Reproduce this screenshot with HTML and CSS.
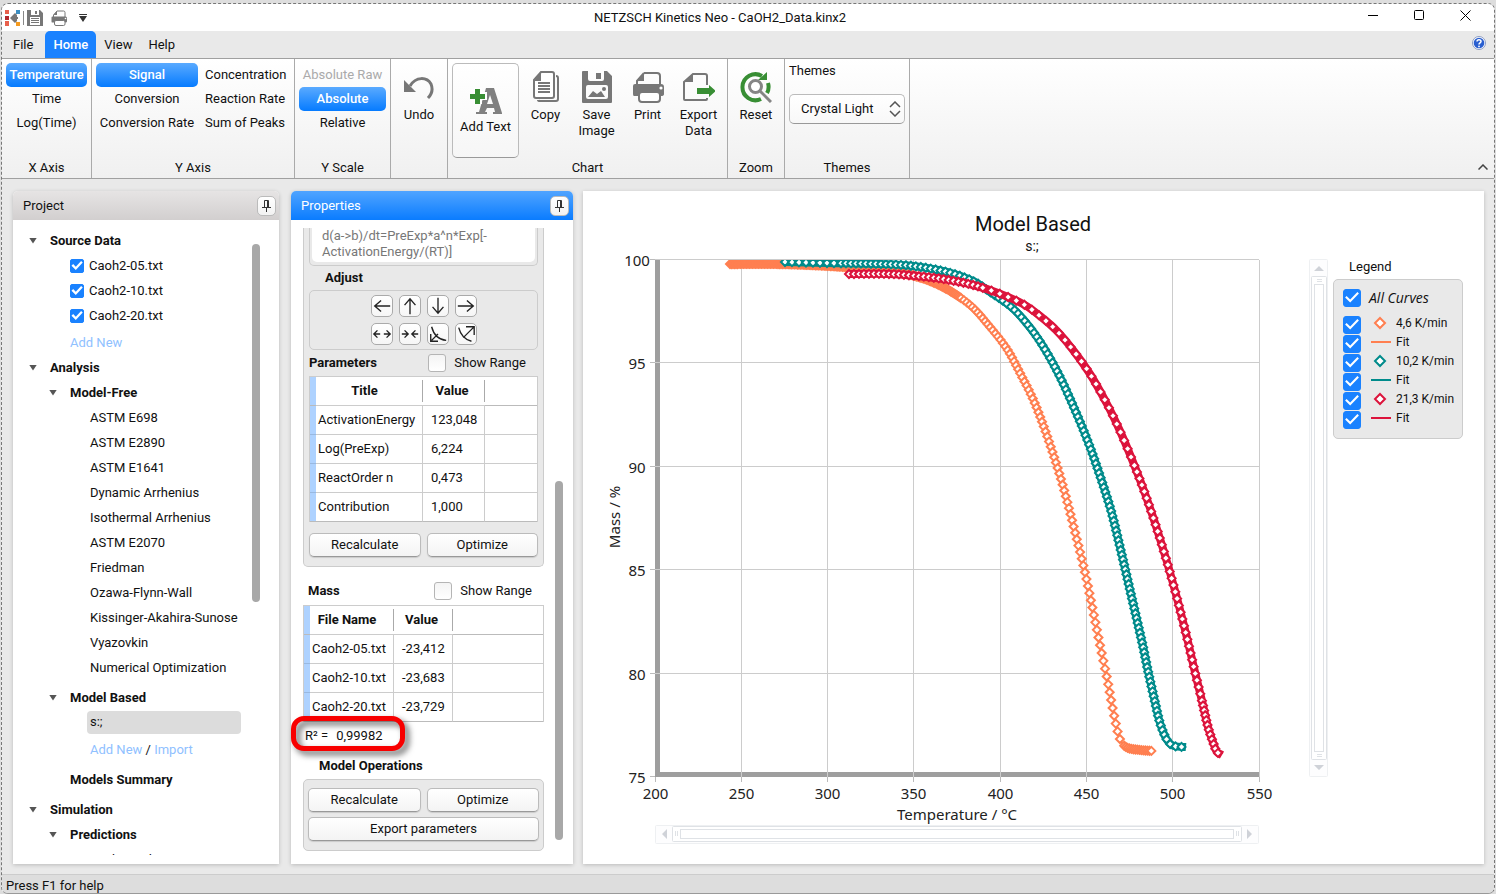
FILE: index.html
```html
<!DOCTYPE html>
<html lang="en">
<head>
<meta charset="utf-8">
<title>NETZSCH Kinetics Neo - CaOH2_Data.kinx2</title>
<link rel="stylesheet" href="styles.css">
</head>
<body>
<div class="window">
  <header class="titlebar">
    <div class="quick">
      <svg class="logo" width="16" height="16" viewBox="0 0 16 16" aria-hidden="true">
        <path fill="#e8604c" d="M0 0h4v4H0zM0 11h4v5H0z"/><path fill="#b3282d" d="M0 6h4v4H0z"/>
        <path fill="#3b8ec2" d="M11 0h4v4h-4z"/><path fill="#f59b20" d="M11 12h4v4h-4z"/>
        <path fill="#777" d="M5 8l5-5 2 2v2h1v2h-1v2l-2 2z"/>
      </svg>
      <span class="quick-sep"></span>
      <button class="icon-btn" aria-label="Save">
        <svg width="16" height="16" viewBox="0 0 16 16"><path fill="#777" fill-rule="evenodd" d="M0 0h13l3 3v13H0zM4 0v5h8V0zM3 7v8h10V7z"/><path fill="#777" d="M8 1h2v3H8zM4 8h8v1H4zM4 10h8v1H4zM4 12h8v1H4z"/></svg>
      </button>
      <button class="icon-btn" aria-label="Print">
        <svg width="16" height="16" viewBox="0 0 32 32"><use href="#printer"/></svg>
      </button>
      <button class="icon-btn" aria-label="Customize toolbar">
        <svg width="8" height="8" viewBox="0 0 8 8"><path fill="#333" d="M0 0h8v1H0zM0 2h8L4 8z"/></svg>
      </button>
    </div>
    <h1 class="window-title">NETZSCH Kinetics Neo - CaOH2_Data.kinx2</h1>
    <div class="window-controls">
      <button aria-label="Minimize"><svg width="11" height="11" viewBox="0 0 11 11"><path d="M0 5.5h10" stroke="#000"/></svg></button>
      <button aria-label="Maximize"><svg width="11" height="11" viewBox="0 0 11 11"><rect x=".5" y=".5" width="9" height="9" rx="1" fill="none" stroke="#000"/></svg></button>
      <button aria-label="Close"><svg width="11" height="11" viewBox="0 0 11 11"><path d="M.5 .5l10 10m0-10l-10 10" stroke="#000"/></svg></button>
    </div>
  </header>

  <nav class="menubar">
    <button class="menu first">File</button>
    <button class="menu active">Home</button>
    <button class="menu">View</button>
    <button class="menu">Help</button>
    <button class="help" aria-label="About"><svg width="14" height="14" viewBox="0 0 14 14"><circle cx="7" cy="7" r="6.5" fill="#fff" stroke="#8a9bc4"/><circle cx="7" cy="7" r="5.3" fill="#2a5fd0"/><path d="M5 5.6C5 3.2 9 3.2 9 5.4 9 6.8 7 6.8 7 8.4" fill="none" stroke="#fff" stroke-width="1.5"/><circle cx="7" cy="10.4" r=".9" fill="#fff"/></svg></button>
  </nav>

  <div class="ribbon">
    <section class="group x-axis">
      <div class="group-body stack">
        <button class="opt on">Temperature</button><button class="opt">Time</button><button class="opt">Log(Time)</button>
      </div>
      <h2>X Axis</h2>
    </section>
    <section class="group y-axis">
      <div class="group-body pair">
        <div class="stack"><button class="opt on">Signal</button><button class="opt">Conversion</button><button class="opt">Conversion Rate</button></div>
        <div class="stack left"><button class="opt">Concentration</button><button class="opt">Reaction Rate</button><button class="opt">Sum of Peaks</button></div>
      </div>
      <h2>Y Axis</h2>
    </section>
    <section class="group y-scale">
      <div class="group-body stack">
        <button class="opt" disabled>Absolute Raw</button><button class="opt on">Absolute</button><button class="opt">Relative</button>
      </div>
      <h2>Y Scale</h2>
    </section>
    <section class="group narrow">
      <div class="group-body">
        <button class="tool"><svg width="32" height="32" viewBox="0 0 32 32"><path fill="none" stroke="#777" stroke-width="3" d="M7 15C13 5 24 6 28 13C30 18 29 23 25 27"/><path fill="#777" d="M1 9v12h12l-4-4z"/></svg><span>Undo</span></button>
      </div>
      <h2></h2>
    </section>
    <section class="group chart-group">
      <div class="group-body tools">
        <button class="tool framed"><svg width="32" height="32" viewBox="0 0 32 32"><path fill="#808080" fill-rule="evenodd" d="M16 5h8l8 25v1h-9v-2h2l-1-4h-7l-2 4h2v2H6v-2h3zM20 12l-3 9h6z"/><path fill="#fff" d="M4 5h8v4h5v8h-5v4H4z"/><path fill="#388e34" d="M5 6h5v5h5v5h-5v5H5v-5H0v-5h5z"/></svg><span>Add Text</span></button>
        <button class="tool"><svg width="32" height="32" viewBox="0 0 32 32"><path fill="#fff" stroke="#777" stroke-width="2" d="M11 1h11q2 0 2 2v22q0 2-2 2H6q-2 0-2-2V9z"/><path fill="#777" d="M11 1v9H4z"/><path fill="none" stroke="#777" stroke-width="2" d="M26 5q2 0 2 2v21q0 2-2 2H10q-2 0-2-1M8 12h12M8 15h12M8 18h12M8 21h12"/></svg><span>Copy</span></button>
        <button class="tool"><svg width="32" height="32" viewBox="0 0 32 32"><path fill="#777" fill-rule="evenodd" d="M1 1q0-1 1-1h24l5 5v26q0 1-1 1H2q-1 0-1-1zM7 0v8q0 2 2 2h12q2 0 2-2V0zM7 14q-2 0-2 2v10q0 2 2 2h18q2 0 2-2V16q0-2-2-2z"/><path fill="#777" d="M15 2h5v6h-5zM7 26l5-6 4 3 4-3 4 6z"/><circle cx="23" cy="18" r="2" fill="#777"/></svg><span>Save Image</span></button>
        <button class="tool"><svg width="32" height="32" viewBox="0 0 32 32"><g id="printer" fill="none"><path stroke="#777" stroke-width="2" d="M12 2h13q3 0 3 3v10M5 15v-5l7-8"/><path fill="#777" d="M12 2v8H5zM1 15q0-2 2-2h26q3 0 3 3v7q0 2-3 2H2q-1 0-1-2z"/><circle cx="29" cy="17" r="1.6" fill="#fff"/><rect x="7" y="21" width="21" height="10" rx="3" fill="#fff" stroke="#777" stroke-width="2"/></g></svg><span>Print</span></button>
        <button class="tool"><svg width="32" height="32" viewBox="0 0 32 32"><path fill="none" stroke="#777" stroke-width="2" d="M24 14V5q0-2-2-2H10L1 11v17q0 1 1 1h21q1 0 1-1v-1"/><path fill="#777" d="M10 3v8H1z"/><path fill="#388e34" d="M14 17h12v-3l7 6-7 6v-3H14z"/></svg><span>Export Data</span></button>
      </div>
      <h2>Chart</h2>
    </section>
    <section class="group narrow">
      <div class="group-body">
        <button class="tool"><svg width="32" height="32" viewBox="0 0 32 32"><path fill="none" stroke="#388e34" stroke-width="4" d="M22 5A13 13 0 1 0 21 28M28 12A13 13 0 0 1 27 22"/><path fill="#388e34" d="M18 9h9V1z"/><circle cx="15.500" cy="15.500" r="6" fill="#fff" stroke="#858585" stroke-width="3"/><path stroke="#858585" stroke-width="3" d="M20 20l11 11"/></svg><span>Reset</span></button>
      </div>
      <h2>Zoom</h2>
    </section>
    <section class="group themes">
      <div class="group-body">
        <label for="theme">Themes</label>
        <div class="select-wrap">
          <select id="theme"><option>Crystal Light</option></select>
          <svg width="12" height="16" viewBox="0 0 12 16" aria-hidden="true"><path fill="none" stroke="#555" stroke-width="1.500" d="M1 6l5-5 5 5M1 10l5 5 5-5"/></svg>
        </div>
      </div>
      <h2>Themes</h2>
    </section>
    <button class="collapse" aria-label="Collapse ribbon"><svg width="10" height="6" viewBox="0 0 10 6"><path fill="none" stroke="#444" stroke-width="1.500" d="M.5 5.500L5 1l4.500 4.500"/></svg></button>
  </div>

  <main class="workspace">
    <aside class="panel project">
      <header class="panel-head"><h2>Project</h2><button class="pin" aria-label="Pin"><svg width="9" height="12" viewBox="0 0 9 12"><path fill="none" stroke="#333" d="M2.500 7V.500h4V7M5.500 1v6M0 7.500h9M4.500 7v5"/></svg></button></header>
      <div class="panel-body">
        <ul class="tree">
          <li class="l1"><i class="tri"></i><b>Source Data</b></li>
          <li class="l2"><label><input type="checkbox" checked>Caoh2-05.txt</label></li>
          <li class="l2"><label><input type="checkbox" checked>Caoh2-10.txt</label></li>
          <li class="l2"><label><input type="checkbox" checked>Caoh2-20.txt</label></li>
          <li class="l2 link-row"><a href="#">Add New</a></li>
          <li class="l1"><i class="tri"></i><b>Analysis</b></li>
          <li class="l2"><i class="tri"></i><b>Model-Free</b></li>
          <li class="l3">ASTM E698</li>
          <li class="l3">ASTM E2890</li>
          <li class="l3">ASTM E1641</li>
          <li class="l3">Dynamic Arrhenius</li>
          <li class="l3">Isothermal Arrhenius</li>
          <li class="l3">ASTM E2070</li>
          <li class="l3">Friedman</li>
          <li class="l3">Ozawa-Flynn-Wall</li>
          <li class="l3">Kissinger-Akahira-Sunose</li>
          <li class="l3">Vyazovkin</li>
          <li class="l3">Numerical Optimization</li>
          <li class="l2 spaced"><i class="tri"></i><b>Model Based</b></li>
          <li class="l3"><span class="selected">s:;</span></li>
          <li class="l3 link-row"><a href="#">Add New</a>&nbsp;/&nbsp;<a href="#">Import</a></li>
          <li class="l2 spaced"><b>Models Summary</b></li>
          <li class="l1 spaced"><i class="tri"></i><b>Simulation</b></li>
          <li class="l2"><i class="tri"></i><b>Predictions</b></li>
          <li class="l3">Isothermal</li>
        </ul>
        <div class="scroll"><div class="thumb"></div></div>
      </div>
    </aside>

    <aside class="panel properties">
      <header class="panel-head"><h2>Properties</h2><button class="pin" aria-label="Pin"><svg width="9" height="12" viewBox="0 0 9 12"><path fill="none" stroke="#333" d="M2.500 7V.500h4V7M5.500 1v6M0 7.500h9M4.500 7v5"/></svg></button></header>
      <div class="panel-body">
        <div class="props">
          <section class="box step">
            <div class="formula"><p>d(a-&gt;b)/dt=PreExp*a^n*Exp[-<br>ActivationEnergy/(RT)]</p></div>
            <h3 class="adjust-title">Adjust</h3>
            <div class="adjust">
              <div class="adjust-row">
                <button aria-label="Left"><svg viewBox="0 0 22 22"><path d="M3 11h17M10 5l-7 6 7 6"/></svg></button>
                <button aria-label="Up"><svg viewBox="0 0 22 22"><path d="M11 3v17M5 10l6-7 6 7"/></svg></button>
                <button aria-label="Down"><svg viewBox="0 0 22 22"><path d="M11 2v17M5 12l6 7 6-7"/></svg></button>
                <button aria-label="Right"><svg viewBox="0 0 22 22"><path d="M2 11h17M12 5l7 6-7 6"/></svg></button>
              </div>
              <div class="adjust-row">
                <button aria-label="Widen"><svg viewBox="0 0 22 22"><path d="M2 11h7M13 11h7M6 7l-4 4 4 4M16 7l4 4-4 4"/></svg></button>
                <button aria-label="Narrow"><svg viewBox="0 0 22 22"><path d="M2 11h7M13 11h7M5 7l4 4-4 4M17 7l-4 4 4 4"/></svg></button>
                <button aria-label="Sharpen"><svg viewBox="0 0 22 22"><path d="M4 3c2 8 6 14 16 15M11 11l-7 7M3 11v8h8"/></svg></button>
                <button aria-label="Flatten"><svg viewBox="0 0 22 22"><path d="M3 4c2 8 6 13 14 15M8 15L19 4M11 3h9v9"/></svg></button>
              </div>
            </div>
            <div class="caption"><h3>Parameters</h3><label><input type="checkbox" class="big">Show Range</label></div>
            <table class="grid params">
              <thead><tr><td class="grip"></td><th class="c1">Title</th><th class="c2">Value</th><td></td></tr></thead>
              <tbody>
                <tr><td class="grip"></td><td>ActivationEnergy</td><td>123,048</td><td></td></tr>
                <tr><td class="grip"></td><td>Log(PreExp)</td><td>6,224</td><td></td></tr>
                <tr><td class="grip"></td><td>ReactOrder n</td><td>0,473</td><td></td></tr>
                <tr><td class="grip"></td><td>Contribution</td><td>1,000</td><td></td></tr>
              </tbody>
            </table>
            <div class="actions"><button class="btn">Recalculate</button><button class="btn">Optimize</button></div>
          </section>
          <div class="caption mass"><h3>Mass</h3><label><input type="checkbox" class="big">Show Range</label></div>
          <table class="grid files">
            <thead><tr><td class="grip"></td><th class="c1">File Name</th><th class="c2">Value</th><td></td></tr></thead>
            <tbody>
              <tr><td class="grip"></td><td>Caoh2-05.txt</td><td>-23,412</td><td></td></tr>
              <tr><td class="grip"></td><td>Caoh2-10.txt</td><td>-23,683</td><td></td></tr>
              <tr><td class="grip"></td><td>Caoh2-20.txt</td><td>-23,729</td><td></td></tr>
            </tbody>
          </table>
          <div class="r2"><span>R² =</span><span>0,99982</span><div class="highlight"></div></div>
          <h3 class="ops-title">Model Operations</h3>
          <section class="box ops">
            <button class="btn">Recalculate</button><button class="btn">Optimize</button><button class="btn wide">Export parameters</button>
          </section>
        </div>
        <div class="scroll"><div class="thumb"></div></div>
      </div>
    </aside>

    <section class="panel chart">
      <svg class="plot" viewBox="583 191 750 673" preserveAspectRatio="xMinYMin meet" role="img" aria-label="Mass versus temperature">
        <defs>
          <clipPath id="area"><rect x="655" y="260" width="604" height="517"/></clipPath>
        </defs>
        <text class="t-title" x="1033" y="231">Model Based</text>
        <text class="t-sub" x="1032" y="251">s:;</text>
        <path fill="#9e9e9e" d="M655 260h5v512h599v5H655z"/>
        <g id="grid"></g>
        <g id="series" clip-path="url(#area)"></g>
        <text class="t-axis" x="957" y="820">Temperature / °C</text>
        <text class="t-axis" transform="translate(620 517) rotate(-90)">Mass / %</text>
        <g class="slider">
          <rect x="655.500" y="825.500" width="603" height="18" rx="1"/>
          <rect class="knob" x="672.500" y="826.500" width="569" height="15" rx="1"/>
          <rect class="knob" x="680.500" y="829.500" width="553" height="9"/>
          <path class="knob" d="M675.500 831v5M677.500 831v5M1236.500 831v5M1238.500 831v5"/>
          <path class="arrow" d="M667 829v10l-5-5zM1247 829v10l5-5z"/>
        </g>
        <g class="slider">
          <rect x="1309.500" y="259.500" width="18" height="517" rx="1"/>
          <rect class="knob" x="1311.500" y="276.500" width="15" height="483" rx="1"/>
          <rect class="knob" x="1314.500" y="284.500" width="9" height="467"/>
          <path class="knob" d="M1317 279.500h5M1317 281.500h5M1317 754.500h5M1317 756.500h5"/>
          <path class="arrow" d="M1314 271h10l-5-5zM1314 765h10l-5 5z"/>
        </g>
      </svg>
      <div class="legend">
        <h3>Legend</h3>
        <div class="legend-box">
          <label class="all"><input type="checkbox" class="big" checked>All Curves</label>
          <label class="item orange"><input type="checkbox" class="big" checked><svg width="20" height="14" viewBox="0 0 20 14"><path d="M9 2l5 5-5 5-5-5z"/></svg><span>4,6 K/min</span></label>
          <label class="item orange"><input type="checkbox" class="big" checked><svg width="20" height="14" viewBox="0 0 20 14"><path d="M0 7h20"/></svg><span>Fit</span></label>
          <label class="item teal"><input type="checkbox" class="big" checked><svg width="20" height="14" viewBox="0 0 20 14"><path d="M9 2l5 5-5 5-5-5z"/></svg><span>10,2 K/min</span></label>
          <label class="item teal"><input type="checkbox" class="big" checked><svg width="20" height="14" viewBox="0 0 20 14"><path d="M0 7h20"/></svg><span>Fit</span></label>
          <label class="item red"><input type="checkbox" class="big" checked><svg width="20" height="14" viewBox="0 0 20 14"><path d="M9 2l5 5-5 5-5-5z"/></svg><span>21,3 K/min</span></label>
          <label class="item red"><input type="checkbox" class="big" checked><svg width="20" height="14" viewBox="0 0 20 14"><path d="M0 7h20"/></svg><span>Fit</span></label>
        </div>
      </div>
    </section>
  </main>

  <footer class="status">Press F1 for help</footer>
</div>
<script src="chart.js"></script>
</body>
</html>
```

FILE: styles.css
```css
* { box-sizing: border-box; }
body {
  margin: 0; padding: 3px 1px 0; height: 100vh; background: #ddd;
  font: 13px/16px Roboto, "Liberation Sans", sans-serif; color: #111;
}
h1, h2, h3, p, ul { margin: 0; padding: 0; font-size: 13px; font-weight: 400; }
h3, b { font-weight: 700; }
button, select, input { font: inherit; color: inherit; margin: 0; }
button { border: 0; background: none; padding: 0; cursor: pointer; }
svg { display: block; }

.window {
  height: 100%; min-height: 0; display: flex; flex-direction: column; overflow: hidden;
  border: 1px dashed #777; border-bottom: 1px solid #999; border-radius: 7px; background: #e9e9e9;
}

.titlebar { display: flex; align-items: center; height: 27px; flex: none; background: #fff; padding-right: 6px; }
.quick { display: flex; align-items: center; width: 88px; padding-left: 3px; }
.quick-sep { width: 1px; height: 14px; margin: 0 3px 0 2px; background: #888; }
.icon-btn + .icon-btn { margin-left: 8px; }
.icon-btn + .icon-btn + .icon-btn { margin-left: 12px; }
.window-title { flex: 1; text-align: center; }
.window-controls { display: flex; padding-bottom: 4px; }
.window-controls button { width: 46px; height: 22px; display: grid; place-items: center; }

.menubar { display: flex; flex: none; height: 28px; padding: 0 7px 0 3px; background: #e9e9e9; border-bottom: 1px solid #a0a0a0; }
.menu { padding: 0 8px; }
.menu.first { margin-right: 4px; }
.menu.active { background: #1a82ff; color: #fff; border-radius: 5px 5px 0 0; font-weight: 500; }
.help { margin: 0 1px 4px auto; }

.ribbon { display: flex; flex: none; height: 120px; background: linear-gradient(#fff, #f0f0f0); border-bottom: 1px solid #a0a0a0; }
.group { display: flex; flex-direction: column; border-right: 1px solid #aaa; padding: 4px 4px 0; }
.group-body { flex: 1; }
.group h2 { height: 20px; line-height: 20px; text-align: center; }
.x-axis { width: 90px; }
.y-axis { width: 203px; }
.y-scale { width: 96px; }
.narrow { width: 57px; padding: 4px 2px 0; }
.chart-group { width: 280px; }
.themes { width: 125px; }
.stack { display: flex; flex-direction: column; }
.opt { height: 24px; border-radius: 5px; text-align: center; white-space: nowrap; }
.opt.on { background: linear-gradient(#5aaaff, #067bff); color: #fff; font-weight: 500; }
.opt:disabled { color: #aaa; }
.pair { display: grid; grid-template-columns: 102px 1fr; gap: 7px; }
.left .opt { text-align: left; }
.tools { display: flex; }
.tool { flex: none; width: 51px; display: flex; flex-direction: column; align-items: center; gap: 4px; padding-top: 8px; text-align: center; justify-content: flex-start; align-self: flex-start; }
.narrow .tool { width: 100%; }
.tool.framed { width: 67px; height: 95px; margin-right: 1px; padding-top: 19px; border: 1px solid #bbb; border-bottom-color: #999; border-radius: 5px; background: linear-gradient(#fff, #f6f6f6); white-space: nowrap; }
.themes label { display: block; }
.select-wrap { position: relative; margin-top: 15px; }
.select-wrap select { appearance: none; width: 100%; height: 30px; padding: 0 24px 0 11px; border: 1px solid #bbb; border-bottom-color: #999; border-radius: 5px; background: linear-gradient(#fff, #f8f8f8); }
.select-wrap svg { position: absolute; right: 4px; top: 7px; pointer-events: none; }
.collapse { margin: auto 6px 8px auto; }

.workspace { flex: 1; min-height: 0; display: flex; padding: 12px 10px 10px 11px; }
.panel { display: flex; flex-direction: column; background: #fff; box-shadow: 0 1px 4px #0003; min-height: 0; }
.panel-head { display: flex; align-items: center; justify-content: space-between; flex: none; height: 29px; padding: 0 3px 0 10px; border-radius: 5px 5px 0 0; background: linear-gradient(#e6e4e4, #d2cfcf); }
.panel-body { flex: 1; min-height: 0; display: flex; padding: 8px 0 9px; }
.pin { width: 19px; height: 20px; display: grid; place-items: center; border: 1px solid #bbb; border-radius: 5px; background: linear-gradient(#fff, #f2f2f2); }
.project { width: 266px; border-radius: 5px 5px 0 0; margin-right: 12px; }
.properties { width: 282px; border-radius: 5px 5px 0 0; margin-right: 10px; }
.properties .panel-head { padding-right: 4px; background: linear-gradient(#50a4ff, #0a7cff); color: #fff; }
.scroll { width: 8px; flex: none; }
.thumb { width: 8px; border-radius: 4px; background: #a8a8a8; }
.project .scroll { padding-top: 16px; margin-right: 19px; }
.project .thumb { height: 358px; }
.properties .scroll { padding-top: 253px; margin-right: 10px; }
.properties .thumb { height: 359px; }

.tree { flex: 1; overflow: hidden; list-style: none; }
.tree li { display: flex; align-items: center; height: 25px; }
.tree label { display: flex; align-items: center; gap: 5px; }
.l1 { padding-left: 37px; }
.l2 { padding-left: 57px; }
.l3 { padding-left: 77px; }
.tree .link-row { margin-top: 2px; }
.tree .spaced { margin-top: 5px; }
.tri { width: 8px; height: 6px; margin: 0 13px 0 -21px; background: #555; clip-path: polygon(0 0, 100% 0, 50% 100%); }
a { color: #8fc1ff; text-decoration: none; }
.selected { width: 154px; height: 23px; margin-left: -3px; padding: 3px; border-radius: 4px; background: #dcdcdc; }

input[type="checkbox"] { appearance: none; flex: none; width: 14px; height: 14px; border-radius: 2px; border: 1px solid #bbb; background: #fff; display: grid; place-items: center; }
input[type="checkbox"]:checked { border-color: #1a82ff; background: #1a82ff; }
input[type="checkbox"]:checked::after { content: ""; width: 12px; height: 12px; background: #fff; clip-path: polygon(4% 52%, 18% 38%, 40% 60%, 84% 12%, 98% 26%, 40% 88%); }
input.big[type="checkbox"] { width: 18px; height: 18px; border-radius: 3px; border-color: #b5b5b5; background: linear-gradient(#f4f4f4, #fff); }
input.big[type="checkbox"]:checked { border-color: #1a82ff; background: #1a82ff; }
input.big[type="checkbox"]:checked::after { width: 15px; height: 15px; clip-path: polygon(4% 50%, 14% 40%, 38% 64%, 86% 14%, 96% 24%, 38% 84%); }

.props { flex: 1; min-width: 0; margin: 0 11px 0 12px; }
.box { border: 1px solid #ccc; border-radius: 5px; background: #e9e9e9; }
.step { padding: 0 5px 9px; border-top: 0; border-radius: 0 0 5px 5px; }
.formula { height: 38px; padding: 0 2px 3px; border: 1px solid #ccc; border-top: 0; border-radius: 0 0 5px 5px; color: #777; }
.formula p { height: 34px; padding: 0 10px; border-radius: 0 0 5px 5px; background: #fff; }
.adjust-title { height: 24px; padding-left: 16px; line-height: 24px; }
.adjust { height: 60px; padding: 4px 0; border: 1px solid #ccc; border-radius: 5px; display: flex; flex-direction: column; gap: 6px; align-items: center; }
.adjust-row { display: flex; gap: 6px; }
.adjust button { width: 22px; height: 22px; border: 1px solid #aaa; border-radius: 5px; background: linear-gradient(#fff, #f6f6f6); }
.adjust svg { width: 20px; height: 20px; fill: none; stroke: #222; stroke-width: 1.5; }
.caption { display: flex; align-items: center; justify-content: space-between; height: 26px; padding-right: 12px; }
.caption label { display: flex; align-items: center; gap: 8px; }
.mass { height: 38px; padding: 10px 12px 0 5px; }
.grid { width: 100%; table-layout: fixed; border-spacing: 0; border: 1px solid #ccc; border-bottom: 0; background: #fff; }
.grid td, .grid th { height: 29px; padding: 0 0 0 2px; border-right: 1px solid #ccc; border-bottom: 1px solid #ccc; white-space: nowrap; }
.grid td:last-child { border-right: 0; }
.grid tr:last-child td { border-bottom-color: #bbb; }
.grid .grip { width: 6px; padding: 0; border-right: 0; background: #aed2ff; border-bottom-color: #98b8e0; }
.grid td:nth-child(3) { padding-left: 8px; }
.grid th { text-align: center; background: linear-gradient(#aaa, #aaa) right / 1px 22px no-repeat; border-right: 0; }
.grid .c1 { padding: 0 10px 0 0; }
.grid .c2 { padding: 0 4px 0 0; }
.params .c1 { width: 107px; }
.params .c2 { width: 62px; }
.files .c1 { width: 84px; }
.files .c2 { width: 59px; }
.btn { height: 24px; border: 1px solid #bbb; border-bottom-color: #999; border-radius: 5px; background: linear-gradient(#fff, #f4f4f4); box-shadow: 0 1px 1px #0002; }
.actions { display: grid; grid-template-columns: 1fr 1fr; gap: 6px; margin-top: 11px; }
.r2 { position: relative; display: flex; align-items: center; gap: 8px; height: 27px; padding-left: 2px; }
.highlight { position: absolute; left: -12px; top: -6px; width: 114px; height: 35px; border: 5px solid #f80000; border-radius: 13px; filter: drop-shadow(4px 4px 3px #0009); }
.ops-title { height: 30px; padding: 9px 0 0 16px; }
.ops { display: grid; grid-template-columns: 1fr 1fr; gap: 5px 6px; padding: 8px 4px 9px; }
.wide { grid-column: 1 / -1; }

.chart { flex: 1; min-width: 0; flex-direction: row; }
.plot { flex: 1; min-width: 0; height: 100%; }
.plot text { text-anchor: middle; fill: #111; }
.plot .t-title { font-size: 20px; }
.plot .t-sub { font-size: 14px; }
.plot .t-axis { font: 15px "Noto Sans", "Open Sans", sans-serif; fill: #222; }
.slider rect { fill: #fdfdfe; stroke: #eef0f2; }
.slider .knob { fill: #fff; stroke: #dfe2e6; }
.slider .arrow { fill: #cfd2d8; }
.legend { width: 151px; flex: none; padding: 68px 21px 0 0; }
.legend h3 { height: 20px; padding-left: 16px; font-weight: 400; }
.legend-box { padding: 8px 9px 9px; border: 1px solid #ccc; border-radius: 5px; background: #e9e9e9; }
.legend-box label { display: flex; align-items: center; height: 19px; }
.legend-box .all { gap: 8px; margin-bottom: 8px; font: italic 14px "Open Sans", "Noto Sans", sans-serif; }
.legend-box svg { flex: none; margin: 0 5px 4px 10px; fill: #fff; stroke: currentColor; stroke-width: 2; }
.legend-box .item { font-size: 12px; white-space: nowrap; }
.item span { color: #111; padding-bottom: 4px; }
.orange { color: #ff7f50; }
.teal { color: #008b8b; }
.red { color: #dc143c; }

.status { flex: none; height: 19px; padding: 3px 4px 0; background: #ddd; border-top: 1px solid #ccc; }
```

FILE: chart.js
```js
const NS = "http://www.w3.org/2000/svg";
const add = (parent, name, attrs, text) => {
  const el = document.createElementNS(NS, name);
  for (const key in attrs) el.setAttribute(key, attrs[key]);
  if (text) el.textContent = text;
  parent.appendChild(el);
  return el;
};

const grid = document.getElementById("grid");
[200, 250, 300, 350, 400, 450, 500, 550].forEach((t, i) => {
  const x = Math.floor(655 + i * 86.3) + 0.5;
  if (i) add(grid, "path", { d: `M${x} 260V777`, stroke: "#ccc" });
  add(grid, "path", { d: `M${x} 777v5`, stroke: "#bbb" });
  add(grid, "text", { class: "t-axis", x, y: 799 }, String(t));
});
[100, 95, 90, 85, 80, 75].forEach((m, i) => {
  const y = Math.floor(259 + i * 103.5) + 0.5;
  if (m > 75) add(grid, "path", { d: `M655 ${y}H1259`, stroke: "#ccc" });
  add(grid, "path", { d: `M650 ${y}h5`, stroke: "#bbb" });
  add(grid, "text", { class: "t-axis", x: 637, y: y + 6 }, String(m));
});

const curves = [
  { color: "#ff7f50", fit: 2, step: (x, y) => x > 1122 ? 2 : x < 960 ? 1.5 : y > 640 ? 8 : 3.4 + (y - 280) / 80,
    pts: [[730,264],[780,264],[830,266],[880,270],[915,276],[943,287],[970,305],[990,327],[1007,349],[1020,373],[1033,399],[1045,430],[1057,466],[1066,497],[1077,540],[1086,577],[1100,645],[1107,678],[1113,710],[1118,733],[1122,743],[1128,748],[1140,750],[1153,751]] },
  { color: "#008b8b", fit: 8, step: (x, y) => x < 840 ? 7 : x > 1165 ? 6 : 5,
    pts: [[785,262],[827,263],[880,264],[913,266],[947,272],[973,281],[990,292],[1010,306],[1023,319],[1037,337],[1050,358],[1062,381],[1075,410],[1085,434],[1095,461],[1110,507],[1120,547],[1130,590],[1142,642],[1148,671],[1155,702],[1160,723],[1167,740],[1174,746],[1186,747]] },
  { color: "#dc143c", fit: 8, step: (x, y) => x < 980 ? 5 : y < 460 ? 9 : y > 700 ? 5 : 7,
    pts: [[849,274],[890,274],[917,276],[943,279],[973,285],[998,293],[1023,304],[1040,316],[1057,331],[1073,350],[1090,374],[1107,404],[1120,431],[1131,457],[1143,488],[1155,523],[1167,562],[1178,602],[1188,642],[1194,668],[1202,701],[1208,727],[1214,745],[1217,752],[1222,755]] }
];

const series = document.getElementById("series");
for (const { color, fit, step, pts } of curves) {
  let d = `M${pts[0]}`;
  for (let i = 0; i < pts.length - 1; i++) {
    const a = pts[i - 1] || pts[i], b = pts[i], c = pts[i + 1], e = pts[i + 2] || c;
    d += `C${b[0] + (c[0] - a[0]) / 6} ${b[1] + (c[1] - a[1]) / 6} ${c[0] - (e[0] - b[0]) / 6} ${c[1] - (e[1] - b[1]) / 6} ${c}`;
  }
  const line = add(series, "path", { d, fill: "none", stroke: color, "stroke-width": fit });
  const total = line.getTotalLength();
  for (let s = 0; s <= total;) {
    const p = line.getPointAtLength(s);
    add(series, "path", { d: `M${p.x} ${p.y - 4}l4 4-4 4-4-4z`, fill: "#fff", stroke: color, "stroke-width": 2 });
    s += step(p.x, p.y);
  }
}
```
